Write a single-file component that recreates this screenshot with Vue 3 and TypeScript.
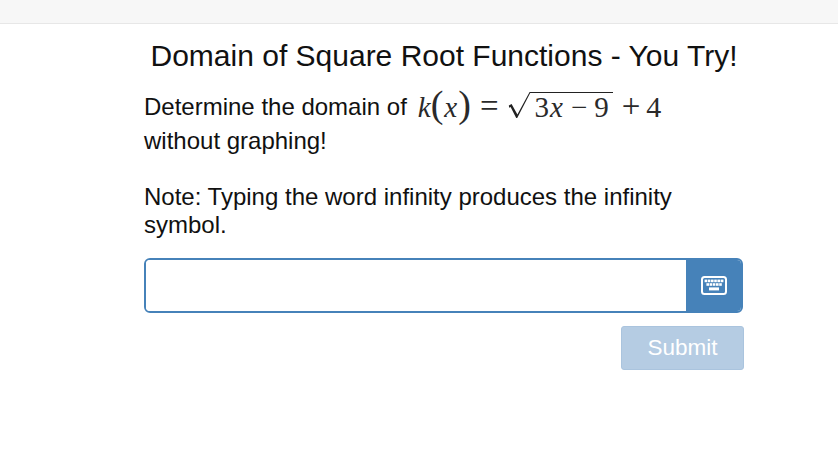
<script setup lang="ts">
const title: string = "Domain of Square Root Functions - You Try!";
</script>

<template>
  <div class="page">
    <div class="topbar"></div>
    <main class="content">
      <h1 class="title">{{ title }}</h1>
      <div class="para first">
        <div class="formula-line">
          <span>Determine the domain of</span>
          <span class="math">
            <i class="k">k</i><span class="paren">(</span><i class="x">x</i><span class="paren">)</span>
            <span class="op">=</span>
            <span class="root">
              <svg class="radical" width="23" height="27" viewBox="0 0 23 27" aria-hidden="true">
                <path d="M0.8 13.6 L3.6 12 L9.4 22.6 L21.6 0 L23 0 L23 1 L22.2 1 L9.2 26 L8.2 26 L2.6 15 L1.2 15.7 Z" fill="#222" />
              </svg>
              <span class="radicand">3<i class="x">x</i><span class="minus">−</span>9</span>
            </span>
            <span class="plus">+</span><span class="four">4</span>
          </span>
        </div>
        <div>without graphing!</div>
      </div>
      <p class="para note">Note: Typing the word infinity produces the infinity symbol.</p>
      <div class="answer">
        <div class="field"></div>
        <button class="kbd" type="button" aria-label="Keyboard">
          <svg width="26" height="19" viewBox="0 0 26 19" aria-hidden="true">
            <rect x="1" y="1" width="24" height="17" rx="2.5" fill="none" stroke="#fff" stroke-width="2" />
            <g fill="#fff">
              <rect x="3.6" y="3.6" width="2.6" height="2.6" /><rect x="6.8" y="3.6" width="2.6" height="2.6" />
              <rect x="10" y="3.6" width="2.6" height="2.6" /><rect x="13.2" y="3.6" width="2.6" height="2.6" />
              <rect x="16.4" y="3.6" width="2.6" height="2.6" /><rect x="19.6" y="3.6" width="2.8" height="2.6" />
              <rect x="5.4" y="7.2" width="2.6" height="2.6" /><rect x="8.6" y="7.2" width="2.6" height="2.6" />
              <rect x="11.8" y="7.2" width="2.6" height="2.6" /><rect x="15" y="7.2" width="2.6" height="2.6" />
              <rect x="18.2" y="7.2" width="2.6" height="2.6" />
              <rect x="8" y="11.4" width="10" height="3" />
            </g>
          </svg>
        </button>
      </div>
      <div class="actions">
        <button class="submit" type="button">Submit</button>
      </div>
    </main>
  </div>
</template>

<style>
html, body { margin: 0; background: #fff; }
</style>

<style scoped>
.page {
  width: 838px;
  height: 475px;
  overflow: hidden;
  font-family: "Liberation Sans", Arial, sans-serif;
  color: #111;
}
.topbar {
  height: 23px;
  background: #f7f7f7;
  border-bottom: 1px solid #e7e7e7;
}
.content {
  width: 600px;
  margin-left: 144px;
}
.title {
  margin: 0;
  padding-top: 14px;
  font-size: 30px;
  line-height: 36px;
  font-weight: 400;
  text-align: center;
}
.para {
  margin: 0;
  font-size: 24px;
  line-height: 28px;
}
.first { padding-top: 8px; }
.formula-line {
  display: flex;
  align-items: baseline;
  height: 45px;
  line-height: 46px;
}
.note { margin-top: 28px; }
.math {
  font-family: "Liberation Serif", "Times New Roman", serif;
  font-size: 29px;
  margin-left: 11px;
  white-space: nowrap;
  color: #2a2a2a;
  display: inline-flex;
  align-items: baseline;
  transform: translateY(2px);
}
.paren { font-size: 38px; font-weight: 400; line-height: 0; }
.x { margin: 0 1px; }
.op { margin: 0 9px 0 9px; font-size: 33px; line-height: 0; }
.plus { margin: 0 6px 0 9px; font-size: 33px; line-height: 0; }
.four { font-size: 30px; }
.root {
  display: inline-flex;
  align-items: baseline;
}
.radical { display: block; align-self: flex-start; margin-top: 7px; }
.radicand {
  border-top: 1px solid #222;
  margin-top: 7px;
  padding: 1px 4px 0 4px;
  line-height: 26px;
  height: 26px;
}
.minus { margin: 0 7px; }
.answer {
  display: flex;
  height: 55px;
  margin-top: 19px;
  width: 599px;
  box-sizing: border-box;
  border: 2px solid #4682b9;
  border-radius: 6px;
  overflow: hidden;
}
.field { flex: 1; background: #fff; }
.kbd {
  width: 55px;
  border: 0;
  padding: 0;
  background: #4682b9;
  display: flex;
  align-items: center;
  justify-content: center;
}
.actions {
  display: flex;
  justify-content: flex-end;
  margin-top: 13px;
}
.submit {
  width: 123px;
  height: 44px;
  padding: 0;
  border: 1px solid #aac4de;
  border-radius: 3px;
  background: #b5cce3;
  color: #fff;
  font-family: inherit;
  font-size: 22.5px;
}
</style>
